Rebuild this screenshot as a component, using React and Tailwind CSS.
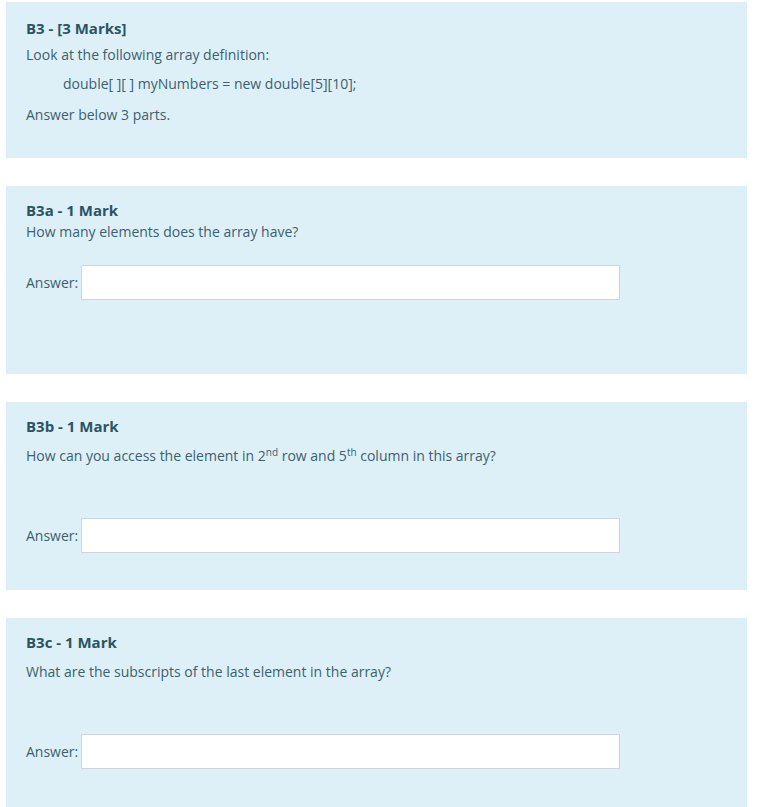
import React from 'react';

const font = { fontFamily: '"Open Sans", "Noto Sans", sans-serif' };

const AnswerRow = () => (
    <div className="flex items-center h-[35px]">
        <span className="w-[55px] shrink-0">Answer:</span>
        <input type="text" className="w-[539px] h-[35px] bg-white border border-[#cdd6dc] outline-none" />
    </div>
);

export default function App() {
    return (
        <div className="bg-white min-h-screen pt-[2px] pl-[6px] text-[14px] text-[#3b6070]" style={font}>
            <div className="w-[741px] flex flex-col gap-7">
                {/* intro */}
                <div className="h-[156px] bg-[#def0f7] px-5 pt-4">
                    <div className="leading-5 text-[15px] font-bold text-[#2a5466]">B3 - [3 Marks]</div>
                    <p className="leading-5 mt-[7px]">Look at the following array definition:</p>
                    <p className="leading-5 mt-[9px] pl-[37px]">double[ ][ ] myNumbers = new double[5][10];</p>
                    <p className="leading-5 mt-[11px]">Answer below 3 parts.</p>
                </div>

                <div className="h-[188px] bg-[#def0f7] px-5 pt-[14px]">
                    <div className="leading-5 text-[15px] font-bold text-[#2a5466]">B3a - 1 Mark</div>
                    <p className="leading-5 mt-[2px]">How many elements does the array have?</p>
                    <div className="mt-[23px]"><AnswerRow /></div>
                </div>

                <div className="h-[188px] bg-[#def0f7] px-5 pt-[14px]">
                    <div className="leading-5 text-[15px] font-bold text-[#2a5466]">B3b - 1 Mark</div>
                    <p className="leading-5 mt-[10px]">
                        How can you access the element in 2<sup className="text-[10px]">nd</sup> row and 5<sup className="text-[10px]">th</sup> column in this array?
                    </p>
                    <div className="mt-[52px]"><AnswerRow /></div>
                </div>

                <div className="h-[190px] bg-[#def0f7] px-5 pt-[14px]">
                    <div className="leading-5 text-[15px] font-bold text-[#2a5466]">B3c - 1 Mark</div>
                    <p className="leading-5 mt-[10px]">What are the subscripts of the last element in the array?</p>
                    <div className="mt-[52px]"><AnswerRow /></div>
                </div>
            </div>
        </div>
    );
}
